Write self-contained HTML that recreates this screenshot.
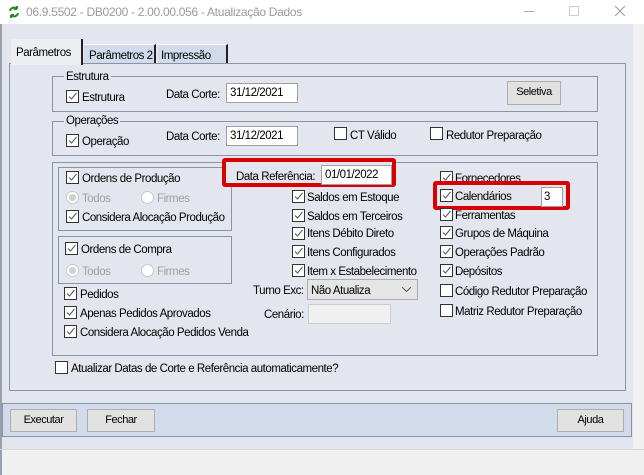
<!DOCTYPE html>
<html><head><meta charset="utf-8"><style>
*{margin:0;padding:0;box-sizing:border-box}
body{width:644px;height:475px;position:relative;overflow:hidden;background:#f0f0f0;font:11px "Liberation Sans",sans-serif;letter-spacing:-0.45px;color:#000}
div,span{position:absolute}
.t{white-space:nowrap;line-height:14px;font-size:11.5px;margin-top:1px}
.cb{width:13px;height:13px;border:1px solid #333;background:#fff}
.cb svg{position:absolute;left:0;top:0}
.rb{width:13px;height:13px;border:1px solid #c8c8c8;border-radius:50%;background:#fff}
.rb.on::after{content:"";position:absolute;left:2px;top:2px;width:7px;height:7px;border-radius:50%;background:#cfcfcf}
.g{border:1px solid #8a93a3}
.in{background:#fff;border:1px solid #a0a0a0;height:20px;padding:2px 3px;line-height:14px;font-size:11.5px}
.btn{background:#e1e1e1;border:1px solid #adadad;text-align:center;line-height:21px}
.leg{background:#e3e6ee;padding:0 2px}
.gr{color:#a0a0a0}
.red{border:4px solid #d90000;border-radius:3px}
</style></head><body>
<div style="left:0;top:0;width:644px;height:24px;background:#fff"></div>
<svg style="position:absolute;left:8px;top:5px" width="12" height="14" viewBox="0 0 12 14"><path d="M2 6 A4 4 0 0 1 9 4 M9 4 L9 1 M9 4 L6 4" stroke="#2a8a2a" stroke-width="2" fill="none"/><path d="M10 8 A4 4 0 0 1 3 10 M3 10 L3 13 M3 10 L6 10" stroke="#2a8a2a" stroke-width="2" fill="none"/></svg>
<div class="t" style="left:26px;top:4px;font-size:12px;letter-spacing:-0.3px;color:#9a9a9a">06.9.5502 - DB0200 - 2.00.00.056 - Atualização Dados</div>
<div style="left:524px;top:11px;width:10px;height:1px;background:#aaa"></div>
<div style="left:569px;top:6px;width:10px;height:10px;border:1px solid #ccc"></div>
<svg style="position:absolute;left:615px;top:6px" width="10" height="10"><path d="M0 0L10 10M10 0L0 10" stroke="#999" stroke-width="1"/></svg>
<div style="left:0;top:24px;width:633px;height:426px;background:#e3e6ee;border-left:2px solid #9aa0aa"></div>
<div style="left:0;top:449px;width:644px;height:1px;background:#d6d6d6"></div>
<div style="left:0;top:450px;width:2px;height:25px;background:#9aa0aa"></div>
<div class="g" style="left:9px;top:63px;width:617px;height:328px;background:#e3e6ee"></div>
<div style="left:11px;top:39px;width:72px;height:26px;background:#eceef2;border-right:2px solid #222"></div>
<div class="t" style="left:16px;top:45px">Parâmetros</div>
<div style="left:84px;top:44px;width:72px;height:19px;background:#d2dbeb;border-right:2px solid #222;border-top:1px solid #fff"></div>
<div class="t" style="left:89px;top:48px">Parâmetros 2</div>
<div style="left:158px;top:44px;width:70px;height:19px;background:#d2dbeb;border-right:2px solid #222;border-top:1px solid #fff"></div>
<div class="t" style="left:161px;top:48px">Impressão</div>

<div class="g" style="left:52px;top:76px;width:546px;height:36px"></div>
<div class="t leg" style="left:64px;top:69px">Estrutura</div>
<div class="cb" style="left:66px;top:90px"><svg width="11" height="11"><path d="M2 5.5L4.5 8L9.5 2" stroke="#555" fill="none"/></svg></div>
<div class="t" style="left:82px;top:90px">Estrutura</div>
<div class="t" style="left:166px;top:87px">Data Corte:</div>
<div class="in" style="left:226px;top:83px;width:72px">31/12/2021</div>
<div class="btn" style="left:507px;top:81px;width:54px;height:24px">Seletiva</div>

<div class="g" style="left:52px;top:121px;width:546px;height:35px"></div>
<div class="t leg" style="left:64px;top:113px">Operações</div>
<div class="cb" style="left:66px;top:134px"><svg width="11" height="11"><path d="M2 5.5L4.5 8L9.5 2" stroke="#555" fill="none"/></svg></div>
<div class="t" style="left:82px;top:134px">Operação</div>
<div class="t" style="left:166px;top:129px">Data Corte:</div>
<div class="in" style="left:226px;top:126px;width:72px">31/12/2021</div>
<div class="cb" style="left:334px;top:127px"></div>
<div class="t" style="left:350px;top:128px">CT Válido</div>
<div class="cb" style="left:430px;top:127px"></div>
<div class="t" style="left:446px;top:128px">Redutor Preparação</div>

<div class="g" style="left:52px;top:162px;width:546px;height:194px"></div>
<div class="g" style="left:58px;top:167px;width:174px;height:64px"></div>
<div class="cb" style="left:66px;top:171px"><svg width="11" height="11"><path d="M2 5.5L4.5 8L9.5 2" stroke="#555" fill="none"/></svg></div>
<div class="t" style="left:82px;top:171px">Ordens de Produção</div>
<div class="rb on" style="left:66px;top:191px"></div><div class="t gr" style="left:82px;top:191px">Todos</div>
<div class="rb" style="left:141px;top:191px"></div><div class="t gr" style="left:157px;top:191px">Firmes</div>
<div class="cb" style="left:66px;top:210px"><svg width="11" height="11"><path d="M2 5.5L4.5 8L9.5 2" stroke="#555" fill="none"/></svg></div>
<div class="t" style="left:82px;top:210px">Considera Alocação Produção</div>

<div class="g" style="left:58px;top:236px;width:174px;height:48px"></div>
<div class="cb" style="left:65px;top:242px"><svg width="11" height="11"><path d="M2 5.5L4.5 8L9.5 2" stroke="#555" fill="none"/></svg></div>
<div class="t" style="left:81px;top:242px">Ordens de Compra</div>
<div class="rb on" style="left:66px;top:264px"></div><div class="t gr" style="left:82px;top:264px">Todos</div>
<div class="rb" style="left:141px;top:264px"></div><div class="t gr" style="left:157px;top:264px">Firmes</div>

<div class="cb" style="left:64px;top:287px"><svg width="11" height="11"><path d="M2 5.5L4.5 8L9.5 2" stroke="#555" fill="none"/></svg></div>
<div class="t" style="left:80px;top:287px">Pedidos</div>
<div class="cb" style="left:64px;top:306px"><svg width="11" height="11"><path d="M2 5.5L4.5 8L9.5 2" stroke="#555" fill="none"/></svg></div>
<div class="t" style="left:80px;top:306px">Apenas Pedidos Aprovados</div>
<div class="cb" style="left:64px;top:325px"><svg width="11" height="11"><path d="M2 5.5L4.5 8L9.5 2" stroke="#555" fill="none"/></svg></div>
<div class="t" style="left:80px;top:325px">Considera Alocação Pedidos Venda</div>

<div class="cb" style="left:292px;top:190px"><svg width="11" height="11"><path d="M2 5.5L4.5 8L9.5 2" stroke="#555" fill="none"/></svg></div>
<div class="t" style="left:307px;top:190px">Saldos em Estoque</div>
<div class="cb" style="left:292px;top:209px"><svg width="11" height="11"><path d="M2 5.5L4.5 8L9.5 2" stroke="#555" fill="none"/></svg></div>
<div class="t" style="left:307px;top:209px">Saldos em Terceiros</div>
<div class="cb" style="left:292px;top:227px"><svg width="11" height="11"><path d="M2 5.5L4.5 8L9.5 2" stroke="#555" fill="none"/></svg></div>
<div class="t" style="left:307px;top:226px">Itens Débito Direto</div>
<div class="cb" style="left:292px;top:245px"><svg width="11" height="11"><path d="M2 5.5L4.5 8L9.5 2" stroke="#555" fill="none"/></svg></div>
<div class="t" style="left:307px;top:245px">Itens Configurados</div>
<div class="cb" style="left:292px;top:264px"><svg width="11" height="11"><path d="M2 5.5L4.5 8L9.5 2" stroke="#555" fill="none"/></svg></div>
<div class="t" style="left:307px;top:264px">Item x Estabelecimento</div>
<div class="t" style="left:253px;top:283px">Turno Exc:</div>
<div style="left:307px;top:279px;width:111px;height:21px;background:#e5e5e5;border:1px solid #acacac"></div>
<div class="t" style="left:311px;top:283px">Não Atualiza</div>
<svg style="position:absolute;left:402px;top:287px" width="9" height="5"><path d="M0 0L4.5 4.5L9 0" stroke="#555" fill="none"/></svg>
<div class="t" style="left:264px;top:307px">Cenário:</div>
<div style="left:308px;top:304px;width:83px;height:20px;background:#f0f0f0;border:1px solid #ccc"></div>

<div class="red" style="left:222px;top:158px;width:174px;height:29px;background:#e3e6ee"></div>
<div class="t" style="left:236px;top:169px">Data Referência:</div>
<div class="in" style="left:321px;top:165px;width:71px">01/01/2022</div>

<div class="cb" style="left:440px;top:171px"><svg width="11" height="11"><path d="M2 5.5L4.5 8L9.5 2" stroke="#555" fill="none"/></svg></div>
<div class="t" style="left:455px;top:171px">Fornecedores</div>
<div class="red" style="left:433px;top:181px;width:137px;height:29px;background:#e3e6ee"></div>
<div class="cb" style="left:440px;top:189px"><svg width="11" height="11"><path d="M2 5.5L4.5 8L9.5 2" stroke="#555" fill="none"/></svg></div>
<div class="t" style="left:455px;top:189px">Calendários</div>
<div class="in" style="left:541px;top:187px;width:22px;padding:2px 2px">3</div>
<div class="cb" style="left:440px;top:208px"><svg width="11" height="11"><path d="M2 5.5L4.5 8L9.5 2" stroke="#555" fill="none"/></svg></div>
<div class="t" style="left:455px;top:208px">Ferramentas</div>
<div class="cb" style="left:440px;top:226px"><svg width="11" height="11"><path d="M2 5.5L4.5 8L9.5 2" stroke="#555" fill="none"/></svg></div>
<div class="t" style="left:455px;top:226px">Grupos de Máquina</div>
<div class="cb" style="left:440px;top:245px"><svg width="11" height="11"><path d="M2 5.5L4.5 8L9.5 2" stroke="#555" fill="none"/></svg></div>
<div class="t" style="left:455px;top:245px">Operações Padrão</div>
<div class="cb" style="left:440px;top:264px"><svg width="11" height="11"><path d="M2 5.5L4.5 8L9.5 2" stroke="#555" fill="none"/></svg></div>
<div class="t" style="left:455px;top:264px">Depósitos</div>
<div class="cb" style="left:440px;top:284px"></div>
<div class="t" style="left:455px;top:284px">Código Redutor Preparação</div>
<div class="cb" style="left:440px;top:304px"></div>
<div class="t" style="left:455px;top:304px">Matriz Redutor Preparação</div>

<div class="cb" style="left:55px;top:361px"></div>
<div class="t" style="left:71px;top:361px">Atualizar Datas de Corte e Referência automaticamente?</div>

<div style="left:2px;top:403px;width:630px;height:34px;background:#d2dbeb;border:1px solid #8a93a3"></div>
<div class="btn" style="left:10px;top:409px;width:67px;height:23px">Executar</div>
<div class="btn" style="left:87px;top:409px;width:68px;height:23px">Fechar</div>
<div class="btn" style="left:557px;top:409px;width:67px;height:23px">Ajuda</div>
</body></html>
